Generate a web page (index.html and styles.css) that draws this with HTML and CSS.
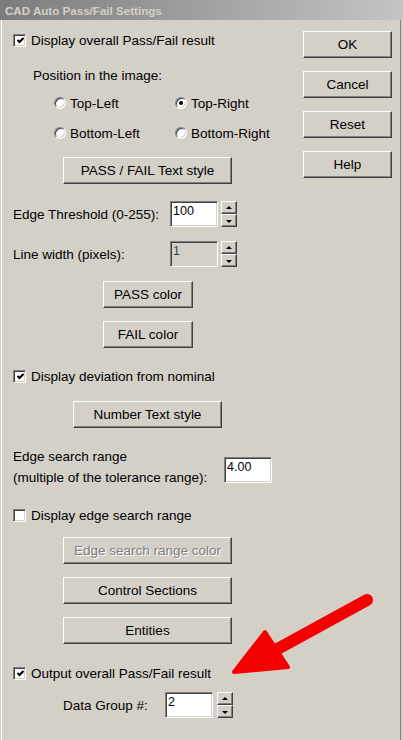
FILE: index.html
```html
<!DOCTYPE html>
<html>
<head>
<meta charset="utf-8">
<link rel="stylesheet" href="styles.css">
</head>
<body>
<div class="window">
  <div class="titlebar">CAD Auto Pass/Fail Settings</div>
  <div class="content">
    <div class="left">
      <div class="row check r-overall"><span class="cb"><svg viewBox="0 0 9 9"><polyline points="1.5,4 3.5,6 7.5,2"/></svg></span>Display overall Pass/Fail result</div>
      <div class="row r-pos">Position in the image:</div>
      <div class="row radios r-rad1">
        <div class="radio first"><span class="rb"></span>Top-Left</div>
        <div class="radio"><span class="rb on"></span>Top-Right</div>
      </div>
      <div class="row radios r-rad2">
        <div class="radio first"><span class="rb"></span>Bottom-Left</div>
        <div class="radio"><span class="rb"></span>Bottom-Right</div>
      </div>
      <div class="btn wide r-pf">PASS / FAIL Text style</div>
      <div class="row field r-thr">
        <span class="flabel">Edge Threshold (0-255):</span>
        <span class="edit">100</span>
        <span class="spin"><span class="up"></span><span class="down"></span></span>
      </div>
      <div class="row field r-lw">
        <span class="flabel">Line width (pixels):</span>
        <span class="edit disabled">1</span>
        <span class="spin"><span class="up"></span><span class="down"></span></span>
      </div>
      <div class="btn color r-pass">PASS color</div>
      <div class="btn color r-fail">FAIL color</div>
      <div class="row check r-dev"><span class="cb"><svg viewBox="0 0 9 9"><polyline points="1.5,4 3.5,6 7.5,2"/></svg></span>Display deviation from nominal</div>
      <div class="btn number r-num">Number Text style</div>
      <div class="search r-search">
        <div class="slabel">Edge search range<br>(multiple of the tolerance range):</div>
        <span class="edit">4.00</span>
      </div>
      <div class="row check r-disp"><span class="cb"></span>Display edge search range</div>
      <div class="btn wide off r-ecol">Edge search range color</div>
      <div class="btn wide r-ctrl">Control Sections</div>
      <div class="btn wide r-ent">Entities</div>
      <div class="row check r-out"><span class="cb"><svg viewBox="0 0 9 9"><polyline points="1.5,4 3.5,6 7.5,2"/></svg></span>Output overall Pass/Fail result</div>
      <div class="row field r-dg">
        <span class="dlabel">Data Group #:</span>
        <span class="edit">2</span>
        <span class="spin wide-gap"><span class="up"></span><span class="down"></span></span>
      </div>
    </div>
    <div class="right">
      <div class="btn side">OK</div>
      <div class="btn side">Cancel</div>
      <div class="btn side">Reset</div>
      <div class="btn side">Help</div>
    </div>
  </div>
  <svg class="arrow" width="403" height="740" viewBox="0 0 403 740">
    <line x1="367" y1="600" x2="272" y2="652" stroke="#f50000" stroke-width="12" stroke-linecap="round"/>
    <polygon points="234,672 265,632 288,667" fill="#f50000" stroke="#f50000" stroke-width="4" stroke-linejoin="round"/>
  </svg>
</div>
</body>
</html>
```

FILE: styles.css
```css
html, body {
  margin: 0;
  padding: 0;
  background: #d4d0c8;
}
body {
  font-family: "Liberation Sans", Arial, sans-serif;
  font-size: 13.5px;
  color: #000;
}
.window {
  position: relative;
  width: 403px;
  height: 740px;
  overflow: hidden;
}
.titlebar {
  box-sizing: border-box;
  height: 20px;
  padding: 1px 0 0 5px;
  line-height: 19px;
  background: linear-gradient(to right, #7c7c7c, #c4c4c4);
  color: #d4d0c8;
  font-weight: bold;
  font-size: 11.6px;
}
.content {
  display: flex;
  height: 720px;
  box-shadow: inset 1px 0 0 #d4d0c8, inset 2px 0 0 #fff, inset -2px 0 0 #d4d0c8, inset -3px 0 0 #808080;
}
.left {
  width: 303px;
  flex: none;
  display: flex;
  flex-direction: column;
  align-items: flex-start;
}
.right {
  display: flex;
  flex-direction: column;
  gap: 13px;
  padding-top: 11px;
}
.row {
  display: flex;
  align-items: center;
  height: 20px;
  flex: none;
}
.btn {
  box-sizing: border-box;
  display: flex;
  align-items: center;
  justify-content: center;
  height: 27px;
  flex: none;
  background: #d4d0c8;
  border: 1px solid;
  border-color: #fff #404040 #404040 #fff;
  box-shadow: inset -1px -1px 0 #808080;
  white-space: nowrap;
}
.btn.off {
  color: #808080;
  text-shadow: 1px 1px 0 #fff;
}
.side { width: 89px; }
.wide { width: 169px; margin-left: 63px; }
.color { width: 90px; margin-left: 103px; }
.number { width: 149px; margin-left: 73px; }

.check { margin-left: 13px; gap: 5px; }
.cb {
  box-sizing: border-box;
  width: 13px;
  height: 13px;
  background: #fff;
  border: 1px solid;
  border-color: #808080 #fff #fff #808080;
  box-shadow: inset 1px 1px 0 #404040, inset -1px -1px 0 #d4d0c8;
  display: flex;
  align-items: center;
  justify-content: center;
}
.cb svg {
  width: 9px;
  height: 9px;
  margin: 1px 0 0 1px;
}
.cb polyline {
  fill: none;
  stroke: #000;
  stroke-width: 2;
}

.r-pos { margin-left: 33px; }
.radios { margin-left: 54px; }
.radio {
  display: flex;
  align-items: center;
  gap: 4px;
}
.radio.first { width: 121px; }
.rb {
  box-sizing: border-box;
  width: 12px;
  height: 12px;
  border-radius: 50%;
  background: #fff;
  border: 1px solid;
  border-color: #808080 #fff #fff #808080;
  box-shadow: inset 1px 1px 0 #404040, inset -1px -1px 0 #d4d0c8;
  position: relative;
}
.rb.on::after {
  content: "";
  position: absolute;
  left: 3px;
  top: 3px;
  width: 4px;
  height: 4px;
  border-radius: 50%;
  background: #000;
}

.field { height: 26px; align-items: stretch; }
.flabel {
  width: 157px;
  margin-left: 13px;
  display: flex;
  align-items: center;
}
.dlabel {
  width: 102px;
  margin-left: 63px;
  display: flex;
  align-items: center;
}
.edit {
  box-sizing: border-box;
  width: 48px;
  height: 26px;
  background: #fff;
  border: 1px solid;
  border-color: #808080 #fff #fff #808080;
  box-shadow: inset 1px 1px 0 #404040, inset -1px -1px 0 #d4d0c8;
  font-size: 12.5px;
  line-height: 14px;
  padding: 2px 0 0 2px;
}
.edit.disabled {
  background: #d4d0c8;
  color: #404040;
}
.spin {
  display: flex;
  flex-direction: column;
  margin-left: 3px;
}
.spin.wide-gap { margin-left: 4px; }
.spin span {
  box-sizing: border-box;
  width: 16px;
  height: 13px;
  background: #d4d0c8;
  border: 1px solid;
  border-color: #fff #404040 #404040 #fff;
  box-shadow: inset -1px -1px 0 #808080;
  display: flex;
  align-items: center;
  justify-content: center;
}
.spin .up::after {
  content: "";
  border-left: 3px solid transparent;
  border-right: 3px solid transparent;
  border-bottom: 3px solid #000;
  margin-bottom: 1px;
}
.spin .down::after {
  content: "";
  border-left: 3px solid transparent;
  border-right: 3px solid transparent;
  border-top: 3px solid #000;
  margin-top: 1px;
}

.search {
  display: flex;
  height: 40px;
  flex: none;
  margin-left: 13px;
}
.slabel {
  width: 211px;
  line-height: 21px;
}
.search .edit { margin-top: 11px; }

.r-overall { margin-top: 10px; }
.r-pos { margin-top: 15px; }
.r-rad1 { margin-top: 8px; }
.r-rad2 { margin-top: 10px; }
.r-pf { margin-top: 14px; }
.r-thr { margin-top: 17px; }
.r-lw { margin-top: 14px; }
.r-pass { margin-top: 14px; }
.r-fail { margin-top: 13px; }
.r-dev { margin-top: 18px; }
.r-num { margin-top: 15px; }
.r-search { margin-top: 18px; }
.r-disp { margin-top: 19px; }
.r-ecol { margin-top: 12px; }
.r-ctrl { margin-top: 13px; }
.r-ent { margin-top: 13px; }
.r-out { margin-top: 19px; }
.r-dg { margin-top: 9px; }

.arrow {
  position: absolute;
  left: 0;
  top: 0;
  pointer-events: none;
}
```
